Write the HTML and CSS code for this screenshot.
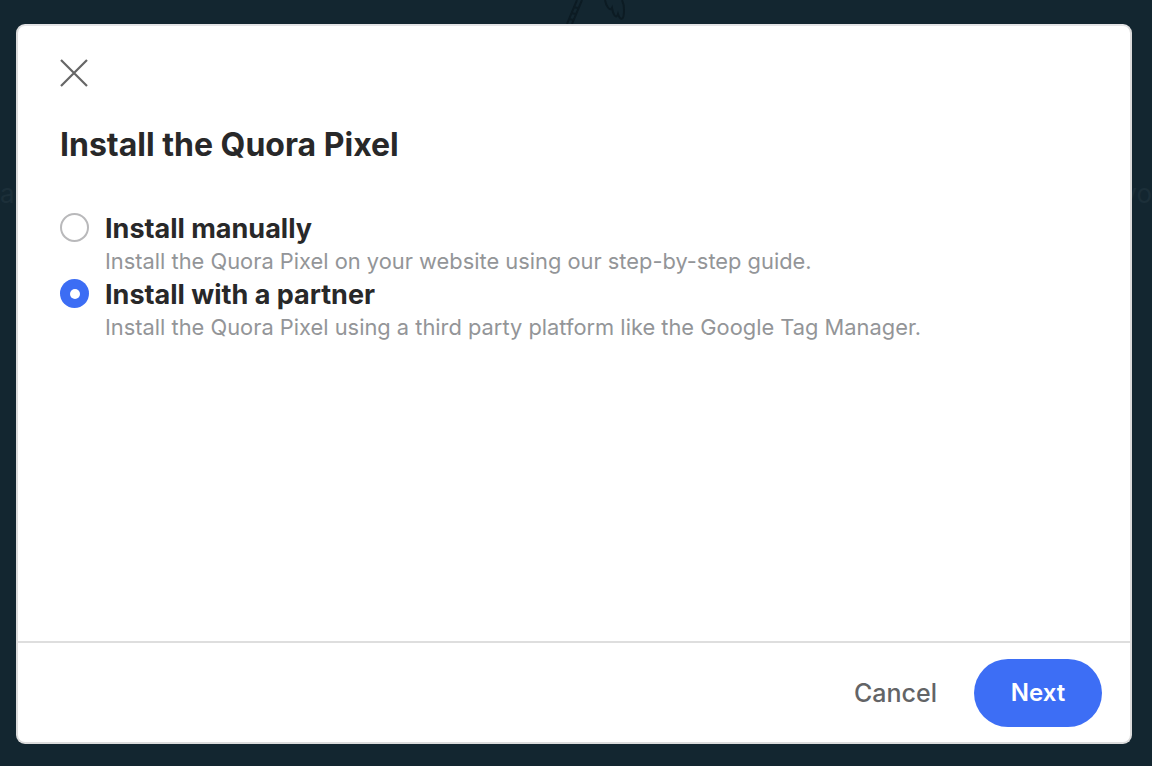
FILE: index.html
```html
<!DOCTYPE html>
<html lang="en">
<head>
	<meta charset="UTF-8">
	<title>Install the Quora Pixel</title>
	<link rel="stylesheet" href="styles.css">
</head>
<body>
	<div class="backdrop">
		<span class="bg_word bg_left">ar</span>
		<span class="bg_word bg_right">yo</span>
		<svg class="bg_art" width="80" height="24" viewBox="0 0 80 24">
			<path d="M12 24 L22 0 M7 24 L17 0 M9 19 L14 20 M11 13 L16 14 M13 7 L18 8" stroke="#0c1b23" stroke-width="2" fill="none"/>
			<path d="M45 0 C46 6 50 12 52 8 C53 14 56 20 58 14 C60 20 64 22 64 10 C64 4 62 0 62 0" stroke="#0c1b23" stroke-width="2" fill="none"/>
		</svg>
	</div>

	<div class="overlay">
		<div class="modal">
			<div class="modal_body">
				<div class="close_btn">
					<svg width="28" height="28" viewBox="0 0 28 28">
						<path d="M1 1 L27 27 M27 1 L1 27" stroke="#666" stroke-width="2.2" fill="none"/>
					</svg>
				</div>
				<h1 class="modal_title">Install the Quora Pixel</h1>
				<ul class="option_list">
					<li class="option">
						<span class="radio"></span>
						<div class="option_text">
							<div class="option_label">Install manually</div>
							<div class="option_desc">Install the Quora Pixel on your website using our step-by-step guide.</div>
						</div>
					</li>
					<li class="option">
						<span class="radio radio_on"></span>
						<div class="option_text">
							<div class="option_label">Install with a partner</div>
							<div class="option_desc">Install the Quora Pixel using a third party platform like the Google Tag Manager.</div>
						</div>
					</li>
				</ul>
			</div>
			<div class="modal_footer">
				<span class="btn_cancel">Cancel</span>
				<span class="btn_next">Next</span>
			</div>
		</div>
	</div>
</body>
</html>
```

FILE: styles.css
```css
*{
	margin:0;
	padding:0;
	box-sizing:border-box;
}

ul{
	list-style-type:none;
}

body{
	background-color:#132630;
	font-family:Inter,"Noto Sans",sans-serif;
	width:1152px;
	height:766px;
	overflow:hidden;
	position:relative;
}

.backdrop{
	position:absolute;
	left:0;
	top:0;
	width:1152px;
	height:766px;
}
.bg_word{
	position:absolute;
	top:178px;
	font-size:26px;
	color:#1c2f39;
}
.bg_left{
	left:0;
}
.bg_right{
	right:0;
}
.bg_art{
	position:absolute;
	left:560px;
	top:0;
}

.overlay{
	position:relative;
	padding:24px 20px 22px 16px;
	height:766px;
	display:flex;
}

.modal{
	flex:1;
	background-color:#fff;
	border:2px solid #dcdcdc;
	border-top-color:#e4e4e6;
	border-radius:9px;
	display:flex;
	flex-direction:column;
}

.modal_body{
	flex:1;
	padding:33px 44px 0 42px;
}

.close_btn{
	width:28px;
	height:28px;
}
.close_btn svg{
	display:block;
}

.modal_title{
	margin-top:38px;
	font-size:32px;
	font-weight:700;
	color:#282829;
	line-height:40px;
}

.option_list{
	margin-top:47px;
}
.option{
	display:flex;
	gap:16px;
	align-items:flex-start;
}
.radio{
	width:29px;
	height:29px;
	border:2px solid #b9b9bb;
	border-radius:50%;
	margin-top:1px;
	flex-shrink:0;
}
.radio_on{
	border:none;
	background-color:#3c6df4;
	display:flex;
	align-items:center;
	justify-content:center;
}
.radio_on:after{
	content:"";
	width:10px;
	height:10px;
	border-radius:50%;
	background-color:#fff;
}
.option_label{
	font-size:27px;
	font-weight:700;
	color:#282829;
	line-height:33px;
}
.option_desc{
	font-size:21.85px;
	color:#939598;
	line-height:33px;
}

.modal_footer{
	border-top:2px solid #dedede;
	height:101px;
	display:flex;
	align-items:center;
	justify-content:flex-end;
	padding:0 28px 0 0;
	gap:37px;
}
.btn_cancel{
	font-size:25px;
	font-weight:500;
	color:#636466;
}
.btn_next{
	width:128px;
	height:68px;
	border-radius:34px;
	background-color:#3d6ef5;
	color:#fff;
	font-size:24px;
	font-weight:600;
	display:flex;
	align-items:center;
	justify-content:center;
}
```
